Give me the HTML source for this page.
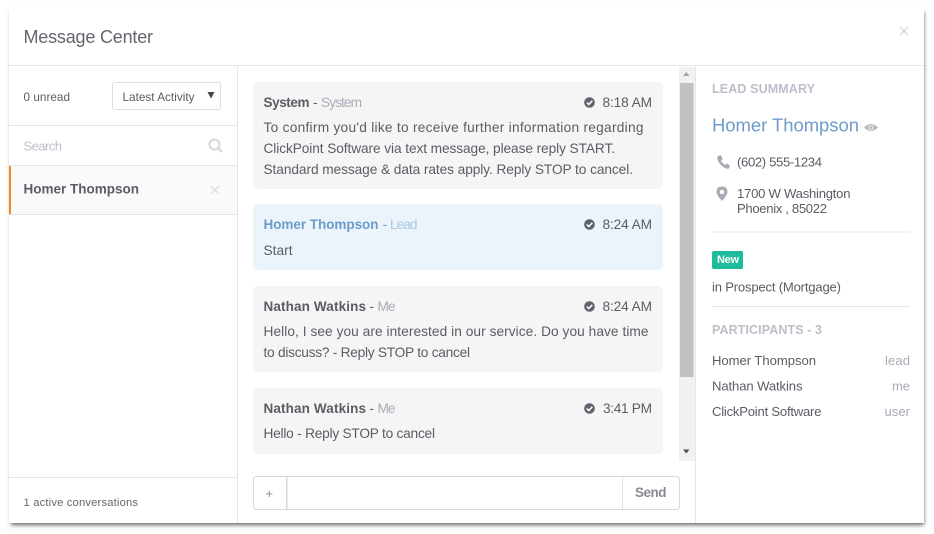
<!DOCTYPE html>
<html><head><meta charset="utf-8"><style>
html,body{margin:0;padding:0;width:934px;height:534px;background:#fff;overflow:hidden}
#m{position:absolute;left:9px;top:8px;width:915px;height:515px;background:#fff;box-shadow:1px 3px 4px -1px rgba(0,0,0,.6)}
svg{position:absolute;left:0;top:0;filter:blur(.3px)}
text{font-family:"Liberation Sans",sans-serif;font-size:13.700px;fill:#5a5d65}
.b{font-weight:bold;font-size:13.500px}
.g{fill:#a9adb8}
.h{font-weight:bold;font-size:12.500px;fill:#bcbfc9}
.s{font-size:13.100px}
</style></head><body>
<div id="m"></div>
<svg width="934" height="534" viewBox="0 0 934 534" xmlns="http://www.w3.org/2000/svg">
<defs>
<g id="chk"><circle r="5.300" fill="#60636d"/><path d="M-2.700 0 L-.7 2 L2.800 -1.700" fill="none" stroke="#fff" stroke-width="1.500"/></g>
</defs>
<!-- structure lines -->
<rect x="9" y="65" width="915" height="1" fill="#e6e6e6"/>
<rect x="237" y="66" width="1" height="457" fill="#e6e6e6"/>
<rect x="695" y="66" width="1" height="457" fill="#e6e6e6"/>
<!-- header -->
<text x="23.500" y="43" style="font-size:18px;fill:#63666e" textLength="129.500" lengthAdjust="spacing">Message Center</text>
<path d="M900 27 L908 35 M908 27 L900 35" stroke="#cfd1d6" stroke-width="1.200"/>
<!-- left column -->
<text x="23.500" y="101" style="font-size:11.700px" textLength="46.500">0 unread</text>
<rect x="112.500" y="82.500" width="108" height="27" rx="2" fill="#fff" stroke="#dcdde0"/>
<text x="122.500" y="101" style="font-size:11.700px" textLength="72">Latest Activity</text>
<path d="M207.500 92 L214.500 92 L211 98.500 Z" fill="#44464c"/>
<rect x="9" y="125" width="228" height="1" fill="#e6e6e6"/>
<text x="23.500" y="150.500" style="font-size:13px;fill:#bcbfc9" textLength="38.500">Search</text>
<circle cx="214.500" cy="144.500" r="5" fill="none" stroke="#d4d6da" stroke-width="2"/>
<path d="M218 148 L222 152" stroke="#d4d6da" stroke-width="2.400"/>
<rect x="9" y="165" width="228" height="1" fill="#e6e6e6"/>
<rect x="9" y="166" width="228" height="48" fill="#fafafa"/>
<rect x="9" y="166" width="2" height="48" fill="#ef8a24"/>
<rect x="9" y="214" width="228" height="1" fill="#e6e6e6"/>
<text x="23.500" y="193.500" class="b" textLength="115.500">Homer Thompson</text>
<path d="M211 186 L219 194 M219 186 L211 194" stroke="#d8d9dd" stroke-width="1.200"/>
<rect x="9" y="477" width="228" height="1" fill="#e6e6e6"/>
<text x="23.500" y="506" style="font-size:11.200px;fill:#63666e" textLength="114.500">1 active conversations</text>
<!-- bubbles -->
<rect x="253" y="82" width="410" height="107" rx="5" fill="#f5f5f5"/>
<rect x="253" y="204" width="410" height="66" rx="5" fill="#ebf3fb"/>
<rect x="253" y="286" width="410" height="86" rx="5" fill="#f5f5f5"/>
<rect x="253" y="388" width="410" height="66" rx="5" fill="#f5f5f5"/>
<!-- msg 1 -->
<text x="263.500" y="107" class="b" textLength="46">System</text>
<text x="313" y="107">-</text>
<text x="321" y="107" class="g" textLength="41">System</text>
<use href="#chk" x="589.500" y="102.500"/>
<text x="602.500" y="107" textLength="49.500">8:18 AM</text>
<text x="263.500" y="132" textLength="380">To confirm you'd like to receive further information regarding</text>
<text x="263.500" y="153" textLength="351.500">ClickPoint Software via text message, please reply START.</text>
<text x="263.500" y="174" textLength="369.500">Standard message &amp; data rates apply. Reply STOP to cancel.</text>
<!-- msg 2 -->
<text x="263.500" y="229" class="b" style="fill:#6f9bcb" textLength="115">Homer Thompson</text>
<text x="382.500" y="229" style="fill:#6f9bcb">-</text>
<text x="390" y="229" style="fill:#a9c6e4" textLength="27.500">Lead</text>
<use href="#chk" x="589.500" y="224.500"/>
<text x="602.500" y="229" textLength="49.500">8:24 AM</text>
<text x="263.500" y="255" textLength="29">Start</text>
<!-- msg 3 -->
<text x="263.500" y="311" class="b" textLength="102.500">Nathan Watkins</text>
<text x="369.500" y="311">-</text>
<text x="377.500" y="311" class="g" textLength="18">Me</text>
<use href="#chk" x="589.500" y="306.500"/>
<text x="602.500" y="311" textLength="49.500">8:24 AM</text>
<text x="263.500" y="336" textLength="385">Hello, I see you are interested in our service. Do you have time</text>
<text x="263.500" y="357" textLength="206.500">to discuss? - Reply STOP to cancel</text>
<!-- msg 4 -->
<text x="263.500" y="413" class="b" textLength="102.500">Nathan Watkins</text>
<text x="369.500" y="413">-</text>
<text x="377.500" y="413" class="g" textLength="18">Me</text>
<use href="#chk" x="589.500" y="408.500"/>
<text x="603" y="413" textLength="49">3:41 PM</text>
<text x="263.500" y="438" textLength="171.500">Hello - Reply STOP to cancel</text>
<!-- scrollbar -->
<rect x="679" y="67" width="16" height="394" fill="#f1f1f1"/>
<rect x="680" y="83" width="13.500" height="294" fill="#c1c1c1"/>
<path d="M683 76 L689.500 76 L686.250 72 Z" fill="#a3a3a3"/>
<path d="M683 449.500 L689.500 449.500 L686.250 453.500 Z" fill="#505050"/>
<!-- input -->
<rect x="253.500" y="476.500" width="426" height="33" rx="3" fill="#fff" stroke="#d8d9de"/>
<rect x="286" y="477" width="1.500" height="32" fill="#d8d9de"/>
<rect x="622" y="477" width="1" height="32" fill="#e2e3e6"/>
<text x="265.500" y="498" style="font-size:13px;fill:#888b94">+</text>
<text x="635" y="497" class="b" style="fill:#888b94" textLength="31.500">Send</text>
<!-- right column -->
<text x="712" y="93" class="h" textLength="103">LEAD SUMMARY</text>
<text x="712" y="131.500" style="font-size:18.500px;fill:#6f9bcb" textLength="147">Homer Thompson</text>
<path d="M864 127.500 Q871 120.500 878 127.500 Q871 134.500 864 127.500 Z" fill="#b7b9bf"/>
<circle cx="871" cy="127.500" r="2.400" fill="#fff"/><circle cx="871" cy="127.500" r="1.600" fill="#b7b9bf"/>
<path d="M717.500 156.500 L720.500 155 L722.800 159 L721 160.500 Q722.500 163.500 725 165 L726.500 163.500 L730 165.500 L728.800 168.500 Q726.500 169.500 723 166.800 Q719.500 164 717.800 160.500 Q717 158 717.500 156.500 Z" fill="#a8abb4"/>
<path fill-rule="evenodd" d="M722 186.500 Q716.500 186.500 716.500 192 Q716.500 195 722 201 Q727.500 195 727.500 192 Q727.500 186.500 722 186.500 Z M722 189.800 A2.200 2.200 0 1 1 721.990 189.800 Z" fill="#a8abb4"/>
<text x="737" y="166.500" class="s" textLength="85">(602) 555-1234</text>
<text x="737" y="198" class="s" textLength="113.500">1700 W Washington</text>
<text x="737" y="213" class="s" textLength="90">Phoenix , 85022</text>
<rect x="712" y="231.500" width="198" height="1" fill="#e6e6e6"/>
<rect x="712" y="251" width="31" height="18" rx="2" fill="#1fbc9c"/>
<text x="717" y="263" class="b" style="font-size:11px;fill:#fff" textLength="22">New</text>
<text x="712" y="291.500" class="s" textLength="129">in Prospect (Mortgage)</text>
<rect x="712" y="306" width="198" height="1" fill="#e6e6e6"/>
<text x="712" y="334" class="h" textLength="110">PARTICIPANTS - 3</text>
<text x="712" y="365" class="s" textLength="104">Homer Thompson</text>
<text x="885" y="365" class="s g" textLength="25">lead</text>
<text x="712" y="390.500" class="s" textLength="90.500">Nathan Watkins</text>
<text x="892" y="390.500" class="s g" textLength="18">me</text>
<text x="712" y="416" class="s" textLength="109.500">ClickPoint Software</text>
<text x="884.500" y="416" class="s g" textLength="25.500">user</text>
</svg>
</body></html>
